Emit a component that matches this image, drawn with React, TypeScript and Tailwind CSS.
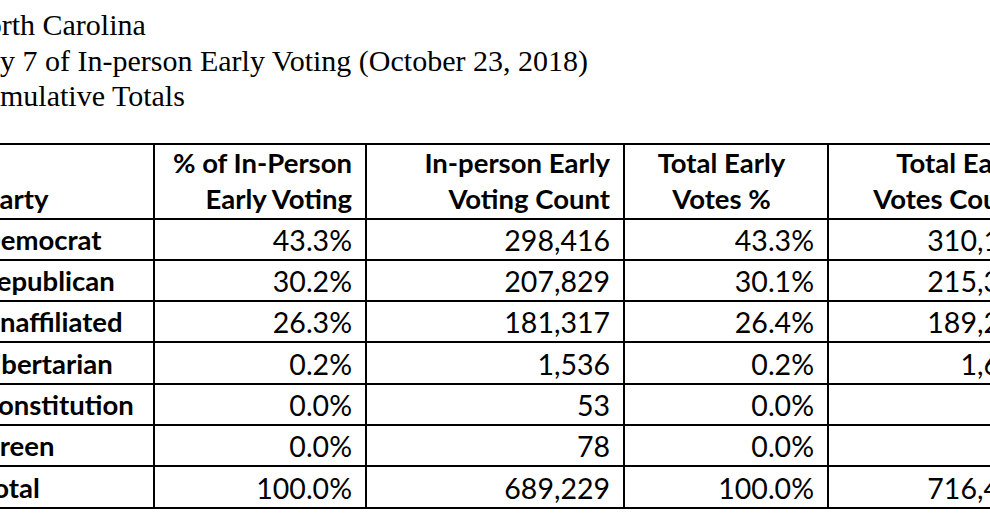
const rows = [
  { party: "Democrat", pct: "43.3%", count: "298,416", totalPct: "43.3%", total: "310,144" },
  { party: "Republican", pct: "30.2%", count: "207,829", totalPct: "30.1%", total: "215,367" },
  { party: "Unaffiliated", pct: "26.3%", count: "181,317", totalPct: "26.4%", total: "189,226" },
  { party: "Libertarian", pct: "0.2%", count: "1,536", totalPct: "0.2%", total: "1,642" },
  { party: "Constitution", pct: "0.0%", count: "53", totalPct: "0.0%", total: "55" },
  { party: "Green", pct: "0.0%", count: "78", totalPct: "0.0%", total: "81" },
  { party: "Total", pct: "100.0%", count: "689,229", totalPct: "100.0%", total: "716,415" },
];

const cell = "border-2 border-black pr-[13px] align-bottom";

export default function App() {
  return (
    <div className="w-[990px] h-[520px] overflow-hidden bg-white text-black">
      <div className="ml-[-35px] pt-[7px]">
        <div className="font-['Liberation_Serif',serif] text-[30px] leading-[35.5px]">
          <p>North Carolina</p>
          <p>Day 7 of In-person Early Voting (October 23, 2018)</p>
          <p>Cumulative Totals</p>
        </div>

        <table className="ml-[12px] mt-[29px] border-collapse table-fixed font-['Lato',sans-serif] w-[1069px]">
          <colgroup>
            <col className="w-[176px]" />
            <col className="w-[212px]" />
            <col className="w-[258px]" />
            <col className="w-[204px]" />
            <col className="w-[219px]" />
          </colgroup>
          <thead>
            <tr className="h-[72px] font-bold text-[27.5px] leading-[36px]">
              <th className={`${cell} text-left pl-[4px] pb-[1px]`}>Party</th>
              <th className={`${cell} text-right pl-[4px] pb-[1px]`}>
                % of In-Person
                <br />
                Early Voting
              </th>
              <th className={`${cell} text-right pl-[4px] pb-[1px]`}>
                In-person Early
                <br />
                Voting Count
              </th>
              <th className={`${cell} text-center pl-[4px] pb-[1px]`}>
                Total Early
                <br />
                Votes %
              </th>
              <th className={`${cell} text-right pl-[4px] pb-[1px] pr-[22px]`}>
                Total Early
                <br />
                Votes Count
              </th>
            </tr>
          </thead>
          <tbody>
            {rows.map((r) => (
              <tr key={r.party} className="h-[41.3px] text-[28.5px] leading-[32px]">
                <td className={`${cell} text-left pl-[1px] font-bold text-[27.5px] whitespace-nowrap pb-[3px]`}>{r.party}</td>
                <td className={`${cell} text-right pl-[4px] pb-[3px]`}>{r.pct}</td>
                <td className={`${cell} text-right pl-[4px] pb-[3px]`}>{r.count}</td>
                <td className={`${cell} text-right pl-[4px] pb-[3px]`}>{r.totalPct}</td>
                <td className={`${cell} text-right pl-[4px] pb-[3px]`}>{r.total}</td>
              </tr>
            ))}
          </tbody>
        </table>
      </div>
    </div>
  );
}
